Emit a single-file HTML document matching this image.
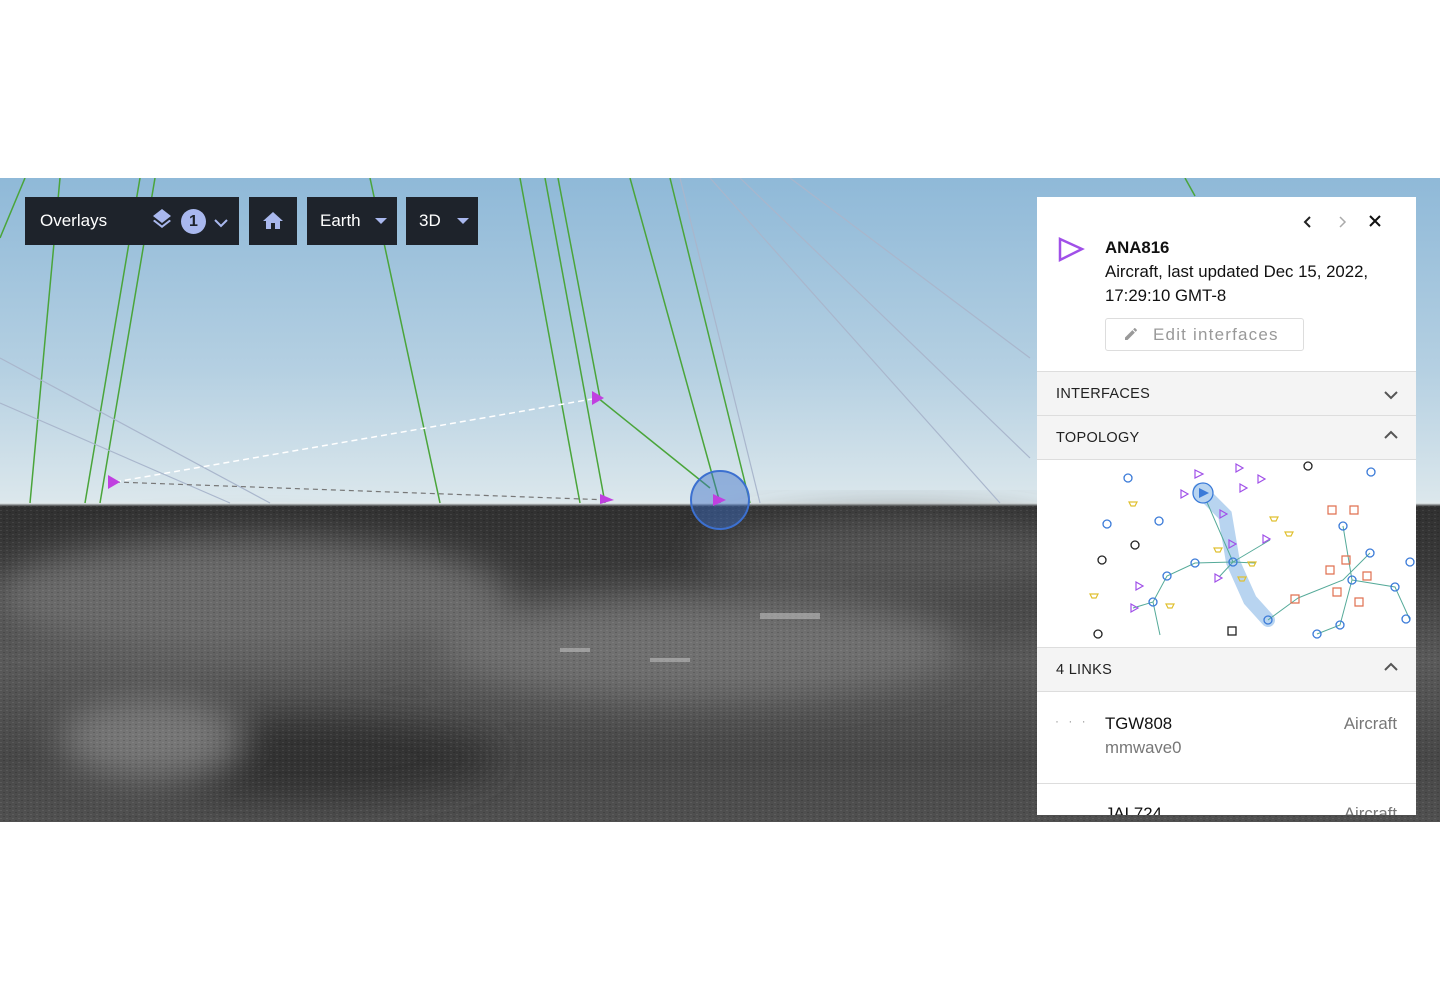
<!DOCTYPE html>
<html><head><style>
*{margin:0;padding:0;box-sizing:border-box}
body{width:1440px;height:1000px;background:#fff;font-family:"Liberation Sans",sans-serif;position:relative;overflow:hidden}
.map{position:absolute;left:0;top:178px;width:1440px;height:644px;overflow:hidden;background:linear-gradient(#8fb9d8 0%,#b5d0e2 30%,#dbe7ec 50%,#e2eaec 50.5%,#303030 51%,#3a3a3a 60%,#5a5a5a 75%,#484848 90%,#505050 100%)}
.tb{position:absolute;top:197px;height:48px;background:#1e232b;color:#fff;font-size:17px;display:flex;align-items:center}
.panel{position:absolute;left:1037px;top:197px;width:379px;height:618px;background:#fff;overflow:hidden}
.sec{height:44px;background:#f4f4f4;border-top:1px solid #ddd;font-size:14.5px;color:#222;display:flex;align-items:center;padding-left:19px;position:relative;letter-spacing:.3px}
.chev{position:absolute;right:18px;top:14px}
</style></head><body>
<div class="map">
<svg width="1440" height="644" style="position:absolute;left:0;top:0">
<defs><filter id="b"><feGaussianBlur stdDeviation="18"/></filter>
<pattern id="n" width="6" height="4" patternUnits="userSpaceOnUse"><rect width="6" height="4" fill="none"/><rect x="0" y="0" width="2" height="1" fill="#fff" opacity=".08"/><rect x="3" y="2" width="2" height="1" fill="#000" opacity=".15"/></pattern></defs>
<g filter="url(#b)">
<ellipse cx="250" cy="420" rx="260" ry="60" fill="#6a6a6a"/>
<ellipse cx="700" cy="470" rx="260" ry="50" fill="#707070"/>
<ellipse cx="900" cy="380" rx="200" ry="40" fill="#555"/>
<ellipse cx="300" cy="580" rx="200" ry="40" fill="#303030"/>
<ellipse cx="150" cy="560" rx="90" ry="40" fill="#777"/>
</g>
<rect x="0" y="327" width="1440" height="317" fill="url(#n)"/>
<g stroke="#4aa53a" stroke-width="1.5" fill="none">
<line x1="60" y1="0" x2="30" y2="325"/><line x1="140" y1="0" x2="85" y2="325"/><line x1="155" y1="0" x2="100" y2="325"/>
<line x1="370" y1="0" x2="440" y2="325"/><line x1="520" y1="0" x2="580" y2="325"/><line x1="545" y1="0" x2="605" y2="325"/><line x1="558" y1="0" x2="600" y2="220"/>
<line x1="630" y1="0" x2="720" y2="325"/><line x1="670" y1="0" x2="750" y2="325"/><line x1="598" y1="220" x2="710" y2="310"/>
<line x1="25" y1="0" x2="0" y2="60"/><line x1="1185" y1="0" x2="1195" y2="18"/>
</g>
<g stroke="#a9b6cc" stroke-width="1.2" fill="none">
<line x1="710" y1="0" x2="1000" y2="325"/><line x1="740" y1="0" x2="1030" y2="280"/><line x1="680" y1="0" x2="760" y2="325"/><line x1="790" y1="0" x2="1030" y2="180"/>
<line x1="0" y1="180" x2="270" y2="325"/><line x1="0" y1="225" x2="230" y2="325"/>
</g>
<line x1="115" y1="304" x2="598" y2="220" stroke="#fff" stroke-width="1.5" stroke-dasharray="6,4"/>
<line x1="115" y1="304" x2="610" y2="322" stroke="#777" stroke-width="1.2" stroke-dasharray="5,4"/>
<polygon points="108,297 120,304 108,311" fill="#c040e0"/>
<polygon points="592,213 604,220 592,227" fill="#c040e0"/>
<polygon points="600,316 614,322 600,326" fill="#c040e0"/>
<circle cx="720" cy="322" r="29" fill="rgba(60,110,200,.45)" stroke="#3c70d0" stroke-width="2"/>
<polygon points="713,316 726,322 713,328" fill="#c040e0"/>
<g fill="#ccc" opacity=".5"><rect x="560" y="470" width="30" height="4"/><rect x="650" y="480" width="40" height="4"/><rect x="760" y="435" width="60" height="6"/></g>
</svg>
</div>
<div class="tb" style="left:25px;width:214px;padding-left:15px">Overlays
<svg width="24" height="24" viewBox="0 0 24 24" style="position:absolute;left:125px;top:12px"><path fill="#a9b8ee" d="M12 16.5l-7.4-5.7L3 12l9 7 9-7-1.6-1.2zM12 14l7.4-5.7L21 7l-9-7-9 7 1.6 1.3z"/></svg>
<div style="position:absolute;left:156px;top:12px;width:25px;height:25px;border-radius:50%;background:#a9b8ee;color:#1e232b;font-weight:bold;text-align:center;line-height:25px;font-size:16px">1</div>
<svg width="14" height="10" style="position:absolute;left:189px;top:21px"><path d="M1 2l6 6 6-6" stroke="#a9b8ee" stroke-width="2" fill="none"/></svg></div>
<div class="tb" style="left:249px;width:48px;justify-content:center"><svg width="24" height="24" viewBox="0 0 24 24"><path fill="#a9b8ee" d="M10 20v-6h4v6h5v-8h3L12 3 2 12h3v8z"/></svg></div>
<div class="tb" style="left:307px;width:90px;padding-left:13px">Earth<svg width="12" height="8" style="margin-left:14px"><path d="M0 1h12L6 7z" fill="#a9b8ee"/></svg></div>
<div class="tb" style="left:406px;width:72px;padding-left:13px">3D<svg width="12" height="8" style="margin-left:16px"><path d="M0 1h12L6 7z" fill="#a9b8ee"/></svg></div>
<div class="panel">
<div style="height:174px;position:relative;box-shadow:0 2px 3px rgba(0,0,0,.15)">
<svg width="12" height="14" style="position:absolute;left:265px;top:18px"><path d="M8 2L3 7l5 5" stroke="#222" stroke-width="2" fill="none"/></svg>
<svg width="12" height="14" style="position:absolute;left:299px;top:18px"><path d="M4 2l5 5-5 5" stroke="#aaa" stroke-width="1.5" fill="none"/></svg>
<svg width="14" height="14" style="position:absolute;left:331px;top:17px"><path d="M2 2l10 10M12 2L2 12" stroke="#111" stroke-width="2"/></svg>
<svg width="28" height="28" style="position:absolute;left:20px;top:39px"><path d="M3 3l22 10L3 24z" stroke="#a050e8" stroke-width="2.5" fill="none"/></svg>
<div style="position:absolute;left:68px;top:39px;font-size:16.8px;line-height:24px;color:#111"><b>ANA816</b><br>Aircraft, last updated Dec 15, 2022,<br>17:29:10 GMT-8</div>
<div style="position:absolute;left:68px;top:121px;width:199px;height:33px;border:1px solid #ddd;border-radius:3px;color:#999;font-size:17px;letter-spacing:1.2px;padding:6px 0 0 47px">Edit interfaces
<svg width="16" height="16" viewBox="0 0 24 24" style="position:absolute;left:17px;top:7px"><path fill="#999" d="M3 17.2V21h3.8L17.8 9.9l-3.7-3.7zM20.7 7c.4-.4.4-1 0-1.4l-2.3-2.3c-.4-.4-1-.4-1.4 0l-1.8 1.8 3.7 3.7z"/></svg></div>
</div>
<div class="sec">INTERFACES<svg class="chev" width="14" height="10" style="top:18px"><path d="M1 2l6 6 6-6" stroke="#555" stroke-width="2" fill="none"/></svg></div>
<div class="sec">TOPOLOGY<svg class="chev" width="14" height="10"><path d="M1 8l6-6 6 6" stroke="#555" stroke-width="2" fill="none"/></svg></div>
<div style="height:188px;background:#fff;position:relative;border-top:1px solid #ddd">
<svg width="379" height="188" viewBox="1037 460 379 188">
<path d="M1200 490 L1225 515 L1233 562 L1250 600 L1268 620" stroke="#b8d4f0" stroke-width="14" fill="none" stroke-linecap="round"/>
<g stroke="#5a9" stroke-width="1" fill="none"><path d="M1203 493L1233 562M1233 562L1195 563L1167 576L1153 602L1133 608M1153 602L1160 635M1233 562L1270 540M1233 562L1255 563M1233 562L1219 577M1268 620L1298 598M1298 598L1343 580L1370 553M1352 580L1395 587L1410 620M1352 580L1343 526M1352 580L1340 625L1317 634"/></g>
<g fill="none" stroke="#3a7ad8" stroke-width="1.3"><circle cx="1128" cy="478" r="4"/><circle cx="1107" cy="524" r="4"/><circle cx="1159" cy="521" r="4"/><circle cx="1371" cy="472" r="4"/><circle cx="1233" cy="562" r="4"/><circle cx="1195" cy="563" r="4"/><circle cx="1167" cy="576" r="4"/><circle cx="1153" cy="602" r="4"/><circle cx="1268" cy="620" r="4"/><circle cx="1343" cy="526" r="4"/><circle cx="1352" cy="580" r="4"/><circle cx="1370" cy="553" r="4"/><circle cx="1395" cy="587" r="4"/><circle cx="1317" cy="634" r="4"/><circle cx="1340" cy="625" r="4"/><circle cx="1410" cy="562" r="4"/><circle cx="1406" cy="619" r="4"/><circle cx="1203" cy="493" r="10" fill="#b8d4f0"/></g>
<g fill="none" stroke="#222" stroke-width="1.3"><circle cx="1135" cy="545" r="4"/><circle cx="1102" cy="560" r="4"/><circle cx="1098" cy="634" r="4"/><circle cx="1308" cy="466" r="4"/><rect x="1228" y="627" width="8" height="8"/></g>
<polygon points="1199,488 1209,493 1199,498" fill="#3a7ad8"/>
<g fill="none" stroke="#a050e8" stroke-width="1.2"><path d="M1195 470l8 4-8 4zM1236 464l7 4-7 4zM1258 475l7 4-7 4zM1240 484l7 4-7 4zM1181 490l7 4-7 4zM1220 510l7 4-7 4zM1263 535l7 4-7 4zM1215 574l7 4-7 4zM1136 582l7 4-7 4zM1131 604l7 4-7 4zM1229 540l7 4-7 4z"/></g>
<g fill="none" stroke="#e0c030" stroke-width="1.2"><path d="M1129 502h8l-2 4h-4zM1270 517h8l-2 4h-4zM1285 532h8l-2 4h-4zM1248 562h8l-2 4h-4zM1214 548h8l-2 4h-4zM1090 594h8l-2 4h-4zM1166 604h8l-2 4h-4zM1238 577h8l-2 4h-4z"/></g>
<g fill="none" stroke="#e07050" stroke-width="1.2"><path d="M1328 506h8v8h-8zM1350 506h8v8h-8zM1326 566h8v8h-8zM1363 572h8v8h-8zM1342 556h8v8h-8zM1333 588h8v8h-8zM1355 598h8v8h-8zM1291 595h8v8h-8z"/></g>
</svg></div>
<div class="sec" style="border-top:1px solid #ddd">4 LINKS<svg class="chev" width="14" height="10"><path d="M1 8l6-6 6 6" stroke="#555" stroke-width="2" fill="none"/></svg></div>
<div style="height:93px;position:relative;border-top:1px solid #ddd;border-bottom:1px solid #ddd">
<div style="position:absolute;left:18px;top:22px;color:#999;font-size:12px;letter-spacing:3px">· · ·</div>
<div style="position:absolute;left:68px;top:22px;font-size:16.8px;color:#111">TGW808</div>
<div style="position:absolute;left:68px;top:46px;font-size:16.8px;color:#777">mmwave0</div>
<div style="position:absolute;right:19px;top:22px;font-size:16.8px;color:#777">Aircraft</div>
</div>
<div style="position:relative;height:40px">
<div style="position:absolute;left:68px;top:20px;font-size:16.8px;color:#111">JAL724</div>
<div style="position:absolute;right:19px;top:20px;font-size:16.8px;color:#777">Aircraft</div>
</div>
</div>
</body></html>
